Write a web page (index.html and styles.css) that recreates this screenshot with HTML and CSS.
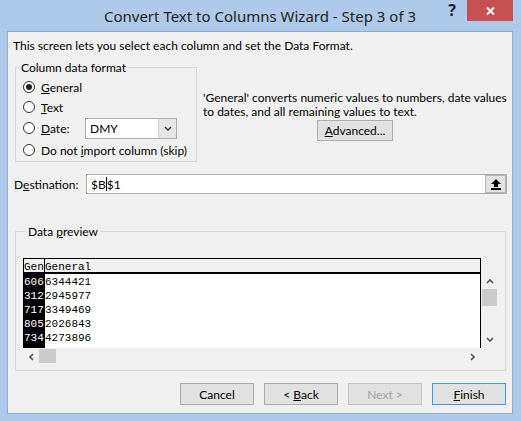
FILE: index.html
```html
<!DOCTYPE html>
<html lang="en">
  <head>
    <meta charset="UTF-8" />
    <title>Convert Text to Columns Wizard - Step 3 of 3</title>
    <link rel="stylesheet" href="styles.css">
  </head>
  <body>
    <div class="window">
      <!-- title bar -->
      <div class="titlebar">
        <span></span>
        <div class="title">Convert Text to Columns Wizard - Step 3 of 3</div>
        <div class="controls">
          <span class="help">?</span>
          <span class="close">
            <svg width="9" height="8" viewBox="0 0 9 8"><path d="M1 0.5 L8 7.5 M8 0.5 L1 7.5" stroke="#fff" stroke-width="2" /></svg>
          </span>
        </div>
      </div>

      <div class="client">
        <p class="intro">This screen lets you select each column and set the Data Format.</p>

        <div class="top-row">
          <!-- column data format -->
          <div class="group format-group">
            <div class="group-title">Column data format</div>
            <div class="radios">
              <div class="radio-row"><span class="radio checked"></span><span><u>G</u>eneral</span></div>
              <div class="radio-row"><span class="radio"></span><span><u>T</u>ext</span></div>
              <div class="radio-row">
                <span class="radio"></span>
                <span class="date-label"><u>D</u>ate:</span>
                <div class="combo">
                  <span class="combo-text">DMY</span>
                  <span class="combo-btn">
                    <svg width="8" height="5" viewBox="0 0 8 5"><path d="M1 1 L4 4 L7 1" fill="none" stroke="#444" stroke-width="1.5" /></svg>
                  </span>
                </div>
              </div>
              <div class="radio-row"><span class="radio"></span><span>Do not <u>i</u>mport column (skip)</span></div>
            </div>
          </div>

          <div class="help-text">
            <p>'General' converts numeric values to numbers, date values<br />to dates, and all remaining values to text.</p>
            <button class="btn advanced"><u>A</u>dvanced...</button>
          </div>
        </div>

        <!-- destination -->
        <div class="dest-row">
          <span class="dest-label">D<u>e</u>stination:</span>
          <div class="dest-input">
            <span class="dest-text">$B<span class="caret"></span>$1</span>
            <span class="collapse-btn">
              <svg width="10" height="11" viewBox="0 0 10 11"><path d="M5 0 L10 5 H7 V8 H3 V5 H0 Z" fill="#000" /><rect x="0" y="9" width="10" height="2" fill="#000" /></svg>
            </span>
          </div>
        </div>

        <!-- data preview -->
        <div class="group preview-group">
          <div class="group-title">Data <u>p</u>review</div>
          <div class="preview">
            <div class="grid">
              <div class="col col-key">
                <div class="head">Gen</div>
                <div class="cells">
                  <div>606</div>
                  <div>312</div>
                  <div>717</div>
                  <div>805</div>
                  <div>734</div>
                </div>
              </div>
              <div class="col col-rest">
                <div class="head">General</div>
                <div class="cells">
                  <div>6344421</div>
                  <div>2945977</div>
                  <div>3349469</div>
                  <div>2026843</div>
                  <div>4273896</div>
                </div>
              </div>
            </div>

            <div class="vscroll">
              <span class="arrow-btn">
                <svg width="8" height="5" viewBox="0 0 8 5"><path d="M1 4 L4 1 L7 4" fill="none" stroke="#4a5666" stroke-width="1.6" /></svg>
              </span>
              <span class="thumb"></span>
              <span class="track"></span>
              <span class="arrow-btn">
                <svg width="8" height="5" viewBox="0 0 8 5"><path d="M1 1 L4 4 L7 1" fill="none" stroke="#4a5666" stroke-width="1.6" /></svg>
              </span>
            </div>

            <div class="hscroll">
              <span class="arrow-btn">
                <svg width="5" height="8" viewBox="0 0 5 8"><path d="M4 1 L1 4 L4 7" fill="none" stroke="#4a5666" stroke-width="1.6" /></svg>
              </span>
              <span class="thumb"></span>
              <span class="track"></span>
              <span class="arrow-btn">
                <svg width="5" height="8" viewBox="0 0 5 8"><path d="M1 1 L4 4 L1 7" fill="none" stroke="#4a5666" stroke-width="1.6" /></svg>
              </span>
            </div>
          </div>
        </div>

        <!-- wizard buttons -->
        <div class="buttons">
          <button class="btn">Cancel</button>
          <button class="btn">&lt; <u>B</u>ack</button>
          <button class="btn" disabled>Next &gt;</button>
          <button class="btn default"><u>F</u>inish</button>
        </div>
      </div>
    </div>
  </body>
</html>
```

FILE: styles.css
```css
body {
  margin: 0;
  font-family: Lato, "Noto Sans", sans-serif;
  font-size: 12px;
  color: #000;
}
.window {
  width: 521px;
  height: 421px;
  box-sizing: border-box;
  background-color: #adcaea;
  padding: 0 8px 7px 7px;
  display: flex;
  flex-direction: column;
  overflow: hidden;
}

/* title bar */
.titlebar {
  height: 31px;
  flex-shrink: 0;
  display: grid;
  grid-template-columns: 1fr auto 1fr;
  align-items: start;
}
.title {
  font-family: "Noto Sans", sans-serif;
  font-size: 15px;
  line-height: 20px;
  padding-top: 6px;
  color: #1e1e1e;
  white-space: nowrap;
}
.controls {
  justify-self: end;
  display: flex;
}
.help {
  width: 20px;
  margin-right: 5px;
  text-align: center;
  font-family: "Noto Sans", sans-serif;
  font-weight: bold;
  font-size: 16px;
  line-height: 21px;
  color: #1b1b33;
}
.close {
  width: 46px;
  height: 21px;
  background-color: #c75050;
  display: flex;
  align-items: center;
  justify-content: center;
}

/* dialog body */
.client {
  flex: 1;
  background-color: #f0f0f0;
  border: 1px solid #91a9c4;
  display: flex;
  flex-direction: column;
}
.intro {
  margin: 0;
  padding: 6px 0 0 5px;
  line-height: 15px;
}
.top-row {
  display: flex;
  align-items: flex-start;
  margin-top: 14px;
}
.group {
  border: 1px solid #d7d7d7;
  box-sizing: border-box;
  flex-shrink: 0;
}
.group-title {
  margin: -8px 0 0 3px;
  padding: 0 2px;
  width: fit-content;
  background-color: #f0f0f0;
  line-height: 15px;
}
.format-group {
  width: 182px;
  margin-left: 7px;
}
.radios {
  display: grid;
  grid-template-rows: 20px 20px 22px 22px;
  margin-top: 2px;
  padding-left: 7px;
  white-space: nowrap;
}
.radio-row {
  display: flex;
  align-items: center;
  gap: 6px;
}
.radio {
  width: 12px;
  height: 12px;
  box-sizing: border-box;
  border: 1px solid #333;
  border-radius: 50%;
  background-color: #fff;
  display: flex;
  align-items: center;
  justify-content: center;
}
.radio.checked::after {
  content: "";
  width: 6px;
  height: 6px;
  border-radius: 50%;
  background-color: #222;
}
.date-label {
  width: 38px;
}
.combo {
  width: 92px;
  height: 21px;
  box-sizing: border-box;
  border: 1px solid #abadb3;
  background-color: #fff;
  display: flex;
}
.combo-text {
  flex: 1;
  padding-left: 4px;
  line-height: 19px;
}
.combo-btn {
  width: 17px;
  background-color: #e6e6e6;
  border-left: 1px solid #d0d0d0;
  display: flex;
  align-items: center;
  justify-content: center;
}
.help-text {
  margin-left: 6px;
  padding-top: 24px;
  display: flex;
  flex-direction: column;
  align-items: flex-start;
}
.help-text p {
  margin: 0;
  line-height: 14px;
  white-space: nowrap;
}
.btn {
  width: 74px;
  height: 22px;
  box-sizing: border-box;
  padding: 0;
  border: 1px solid #adadad;
  background-color: #e1e1e1;
  font-family: inherit;
  font-size: 12px;
  color: #000;
}
.btn.advanced {
  width: 76px;
  height: 21px;
  margin: 1px 0 0 114px;
}
.btn.default {
  border-color: #3c9bf0;
}
.btn:disabled {
  color: #a0a0a0;
  border-color: #c4c4c4;
}

/* destination */
.dest-row {
  display: flex;
  align-items: center;
  margin-top: 12px;
  padding-left: 6px;
}
.dest-label {
  width: 72px;
}
.dest-input {
  width: 421px;
  height: 20px;
  box-sizing: border-box;
  border: 1px solid #abadb3;
  background-color: #fff;
  display: flex;
  align-items: center;
}
.dest-text {
  padding-left: 4px;
  display: flex;
  align-items: center;
}
.caret {
  width: 1px;
  height: 14px;
  background-color: #000;
}
.collapse-btn {
  margin-left: auto;
  width: 21px;
  height: 18px;
  box-sizing: border-box;
  border: 1px solid #b5b5b5;
  background-color: #e3e3e3;
  display: flex;
  align-items: center;
  justify-content: center;
}

/* data preview */
.preview-group {
  width: 491px;
  margin: 37px 0 0 7px;
  padding: 0 0 5px 7px;
}
.preview {
  display: grid;
  grid-template-columns: 458px 17px;
  grid-template-rows: 90px 17px;
  margin-top: 19px;
}
.grid {
  display: flex;
  box-sizing: border-box;
  border: 1px solid #000;
  border-bottom: none;
  font-family: "Liberation Mono", monospace;
  font-size: 11px;
}
.col {
  display: flex;
  flex-direction: column;
}
.col-key {
  width: 20px;
  border-right: 1px solid #000;
}
.col-rest {
  flex: 1;
  background-color: #fff;
}
.head {
  height: 10px;
  padding-top: 3px;
  line-height: 10px;
  background-color: #f0f0f0;
  border-bottom: 2px solid #000;
  white-space: nowrap;
  overflow: hidden;
}
.cells {
  flex: 1;
  padding-top: 1px;
  line-height: 14px;
}
.col-key .cells {
  background-color: #000;
  color: #fff;
}
.vscroll {
  display: flex;
  flex-direction: column;
  padding: 16px 0 1px 1px;
}
.hscroll {
  display: flex;
  padding: 0 1px 0 1px;
}
.arrow-btn {
  width: 15px;
  height: 15px;
  display: flex;
  align-items: center;
  justify-content: center;
}
.hscroll .arrow-btn {
  height: 17px;
}
.thumb {
  background-color: #cbcbcb;
}
.vscroll .thumb {
  width: 15px;
  height: 17px;
}
.hscroll .thumb {
  width: 17px;
  height: 14px;
  margin-top: 1px;
}
.track {
  flex: 1;
}

/* wizard buttons */
.buttons {
  display: flex;
  justify-content: flex-end;
  gap: 10px;
  margin-top: 12px;
  padding-right: 6px;
}
```
